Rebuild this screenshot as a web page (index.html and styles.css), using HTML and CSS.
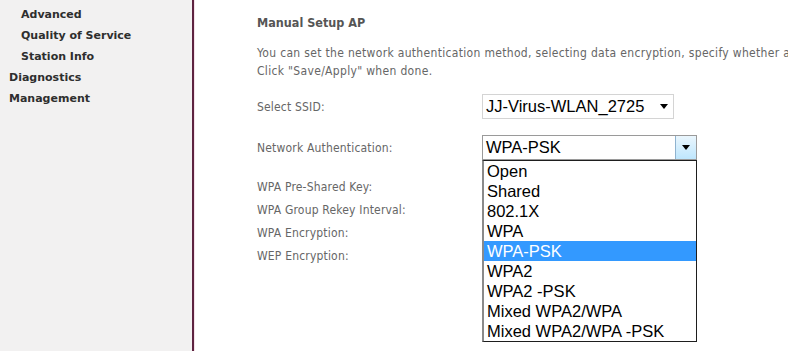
FILE: index.html
```html
<!DOCTYPE html>
<html>
<head>
<meta charset="utf-8">
<link rel="stylesheet" href="styles.css">
</head>
<body>
<div class="page">
  <nav class="sidebar">
    <div class="menu">
      <div class="item sub">Advanced</div>
      <div class="item sub">Quality of Service</div>
      <div class="item sub">Station Info</div>
      <div class="item">Diagnostics</div>
      <div class="item">Management</div>
    </div>
  </nav>
  <main class="content">
    <h1 class="title">Manual Setup AP</h1>
    <p class="intro">You can set the network authentication method, selecting data encryption, specify whether a network key is required to authenticate to this wireless network and specify the encryption strength.<br>Click "Save/Apply" when done.</p>
    <div class="form">
      <div class="row row-select">
        <span class="label">Select SSID:</span>
        <div class="select ssid"><span class="value">JJ-Virus-WLAN_2725</span><span class="arrow"></span></div>
      </div>
      <div class="row row-select row-auth">
        <span class="label">Network Authentication:</span>
        <div class="select auth">
          <span class="value">WPA-PSK</span>
          <span class="btn"><span class="arrow"></span></span>
          <ul class="list">
            <li>Open</li>
            <li>Shared</li>
            <li>802.1X</li>
            <li>WPA</li>
            <li class="sel">WPA-PSK</li>
            <li>WPA2</li>
            <li>WPA2 -PSK</li>
            <li>Mixed WPA2/WPA</li>
            <li>Mixed WPA2/WPA -PSK</li>
          </ul>
        </div>
      </div>
      <div class="row row-text"><span class="label">WPA Pre-Shared Key:</span></div>
      <div class="row row-text"><span class="label">WPA Group Rekey Interval:</span></div>
      <div class="row row-text"><span class="label">WPA Encryption:</span></div>
      <div class="row row-text"><span class="label">WEP Encryption:</span></div>
    </div>
  </main>
</div>
</body>
</html>
```
FILE: styles.css
```css
html, body {
  margin: 0;
  padding: 0;
  background: #ffffff;
  overflow: hidden;
}
.page {
  display: flex;
  width: 788px;
  height: 351px;
  overflow: hidden;
  font-family: "DejaVu Sans Condensed", "DejaVu Sans", sans-serif;
}
.sidebar {
  width: 192px;
  flex: none;
  background: #f2f1f1;
  border-right: 2px solid #5e2340;
  box-shadow: 1px 0 0 #f5e3ea;
  overflow: hidden;
}
.menu {
  padding-top: 4px;
}
.item {
  font-family: "DejaVu Sans", sans-serif;
  font-size: 11px;
  font-weight: bold;
  color: #2e2e2e;
  line-height: 21px;
  padding-left: 9px;
  white-space: nowrap;
}
.item.sub {
  padding-left: 21px;
}
.content {
  flex: 1;
  padding-left: 63px;
  padding-top: 14px;
  min-width: 0;
  position: relative;
}
.title {
  margin: 0;
  font-size: 12.5px;
  line-height: 18px;
  font-weight: bold;
  color: #555555;
}
.intro {
  margin: 12px 0 0 0;
  font-size: 12px;
  line-height: 18px;
  letter-spacing: 0.32px;
  color: #666666;
  white-space: nowrap;
}
.form {
  margin-top: 14px;
  display: flex;
  flex-direction: column;
}
.row {
  display: flex;
  align-items: center;
}
.label {
  width: 225px;
  flex: none;
  font-size: 12px;
  letter-spacing: 0.18px;
  color: #666666;
  white-space: nowrap;
}
.row-select {
  height: 25px;
}
.row-auth {
  margin-top: 16px;
}
.row-text {
  height: 23px;
}
.row-auth + .row-text {
  margin-top: 15px;
}
.select {
  position: relative;
  box-sizing: border-box;
  height: 25px;
  border: 1px solid #c9c9c9;
  background: #ffffff;
  font-family: "Liberation Sans", Arial, sans-serif;
  font-size: 16.5px;
  color: #000000;
  display: flex;
  align-items: center;
}
.select .value {
  padding-left: 3px;
  flex: 1;
  white-space: nowrap;
}
.ssid {
  width: 192px;
  border-color: #d4d4d4;
}
.ssid .arrow {
  margin-right: 5px;
}
.arrow {
  width: 0;
  height: 0;
  border-left: 4px solid transparent;
  border-right: 4px solid transparent;
  border-top: 5px solid #000000;
}
.auth {
  width: 215px;
  border-color: #9a9a9a;
}
.auth .btn {
  box-sizing: border-box;
  width: 21px;
  height: 23px;
  border-left: 1px solid #8fb3cf;
  background: linear-gradient(#eaf6fd, #bee6fd);
  display: flex;
  align-items: center;
  justify-content: center;
}
.list {
  position: absolute;
  left: -1px;
  top: 24px;
  width: 215px;
  box-sizing: border-box;
  margin: 0;
  padding: 0;
  list-style: none;
  background: #ffffff;
  border: 1px solid #1e1e1e;
  border-left: 2px solid #8a8a8a;
}
.list li {
  height: 20px;
  line-height: 20px;
  padding-left: 3px;
  white-space: nowrap;
}
.list li.sel {
  background: #3399ff;
  color: #ffffff;
}
```
